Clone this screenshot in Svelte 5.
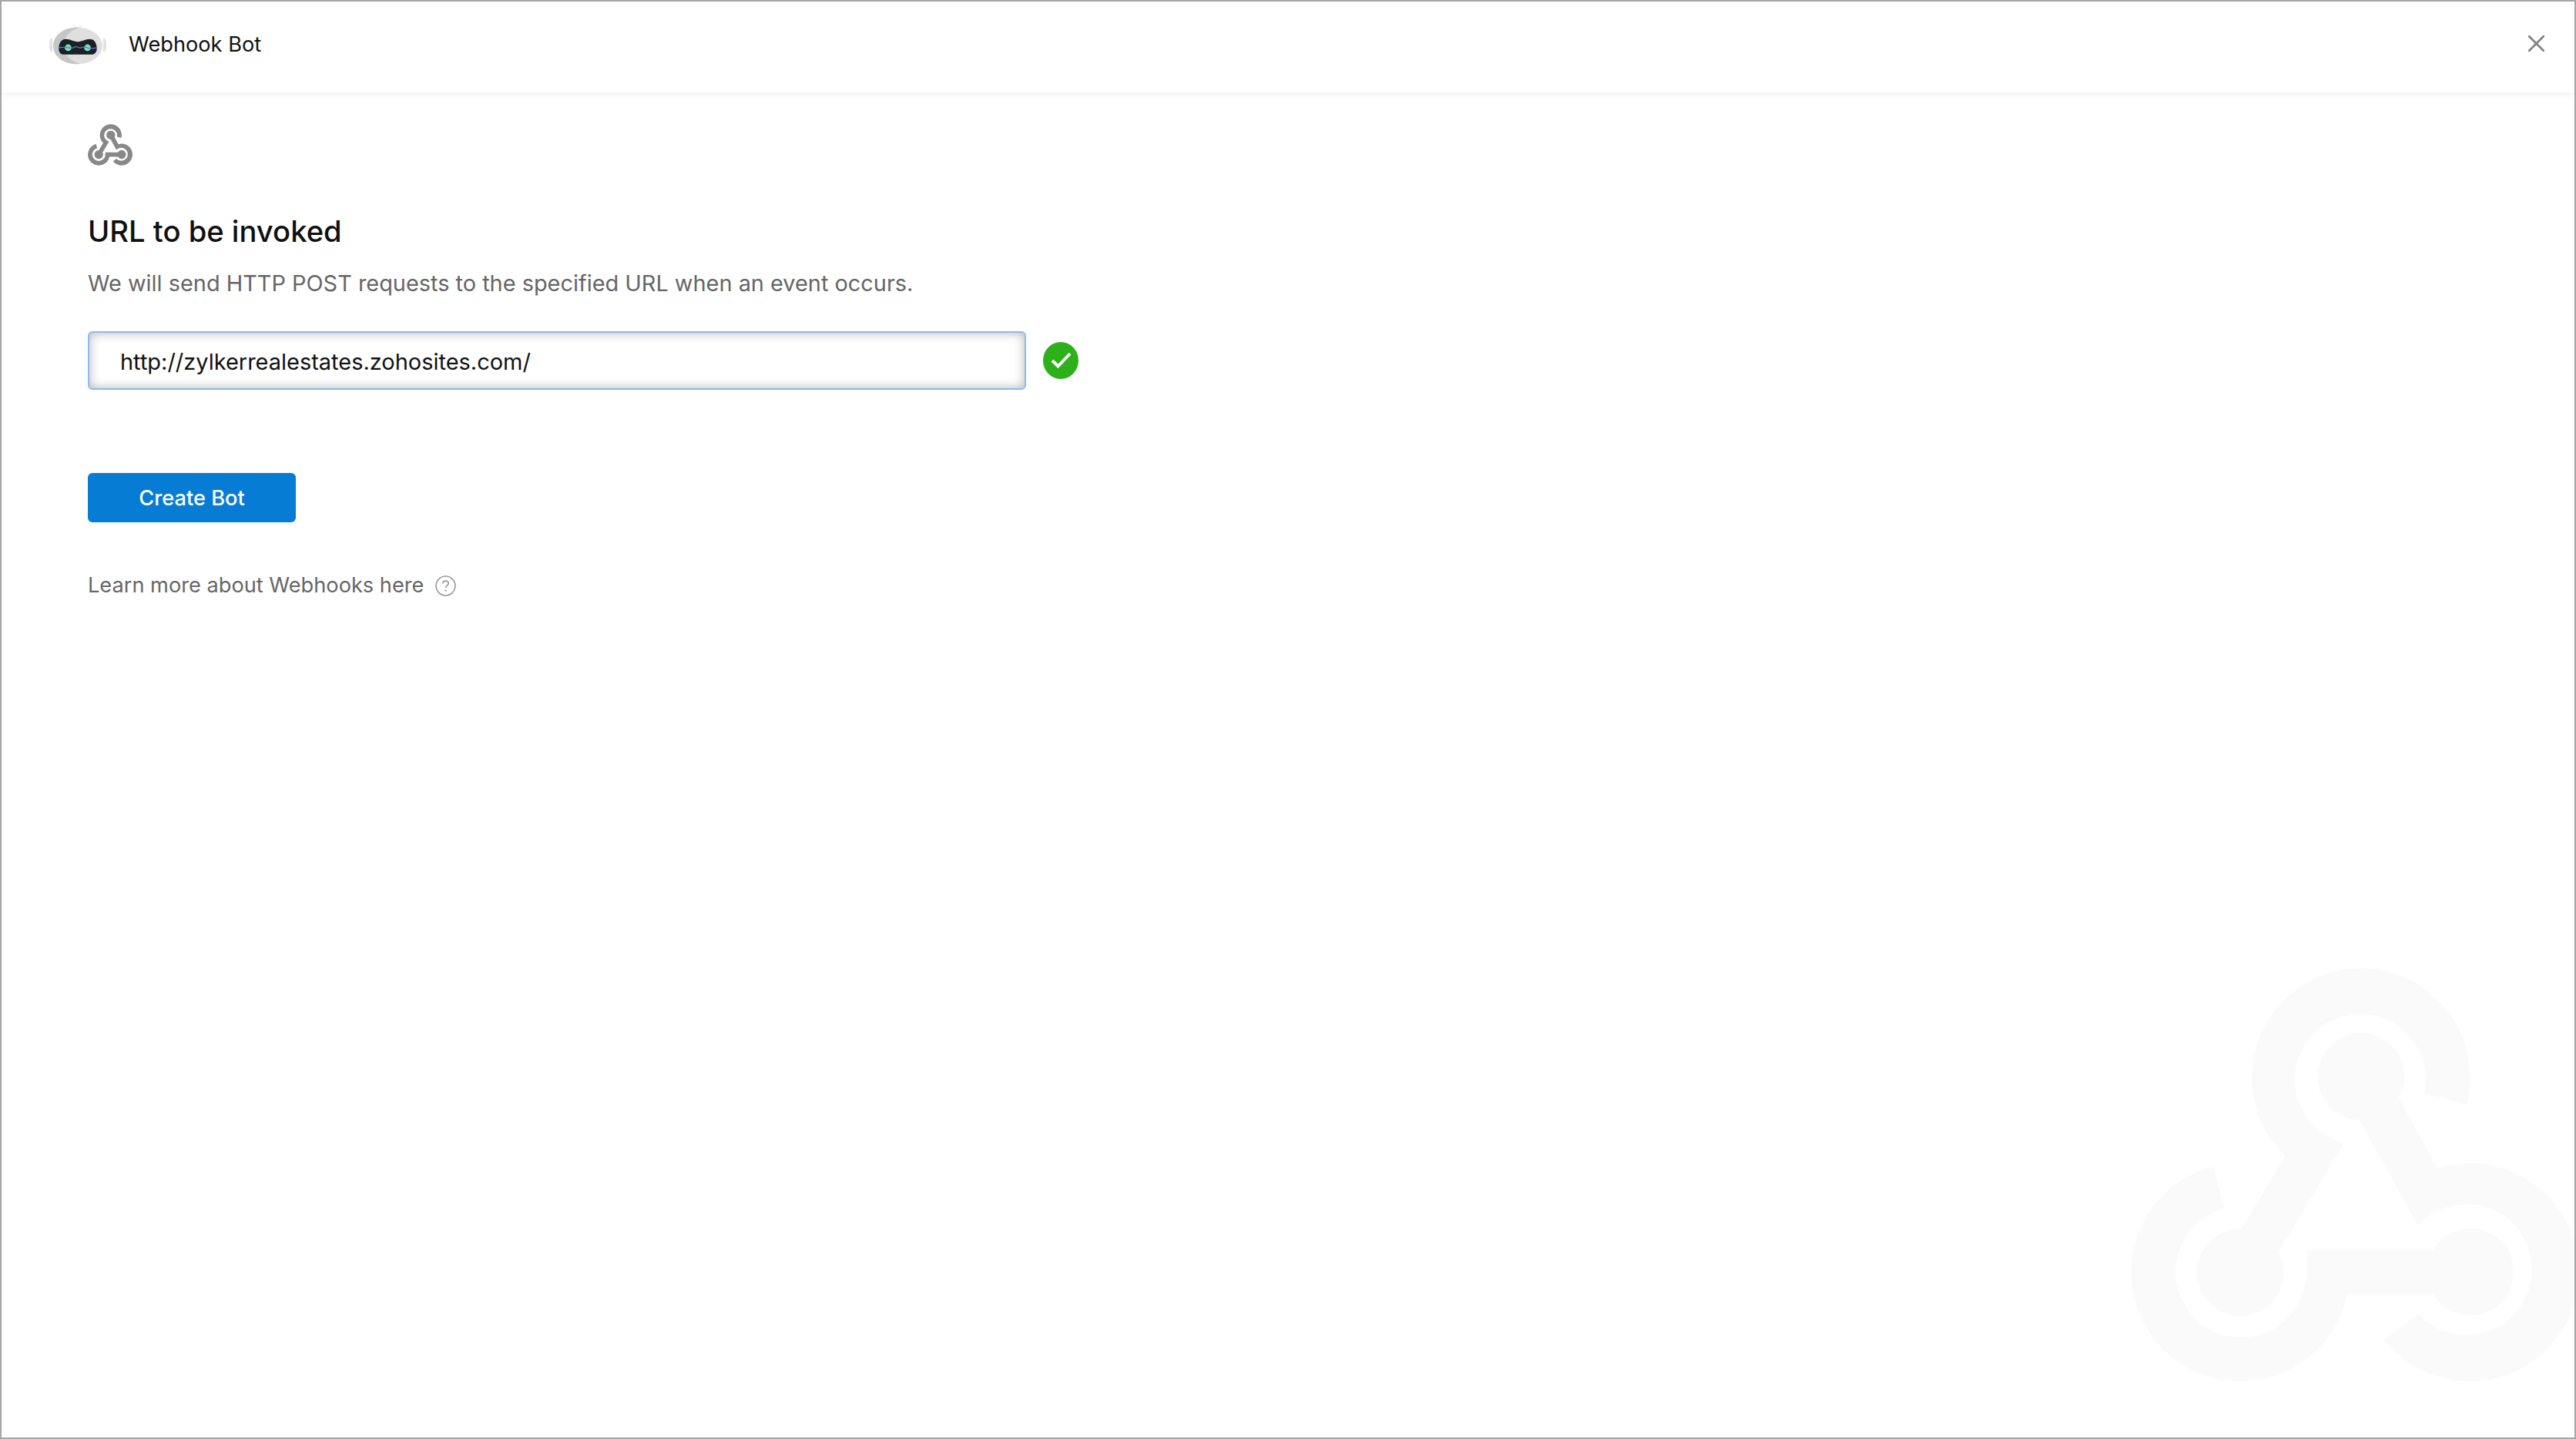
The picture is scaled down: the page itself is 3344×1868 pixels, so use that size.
<script>
  const ring = [
    'M482.3 213.6A141.7 141.7 0 1 0 246.7 281L189.4 375.5A56.5 56.5 0 1 0 238 405L323 263.6A85 85 0 1 1 427 199Z',
    'M343 233.9L419 370.7A85 85 0 1 1 419 485.5L374.9 519.4A141.7 141.7 0 1 0 443.7 296.3L394 205.4A56.5 56.5 0 1 0 343 233.9Z',
    'M153.2 294.2A141.7 141.7 0 1 0 327.1 459.5H437.8A56.5 56.5 0 1 0 437.8 402.9H274.2V432A85 85 0 1 1 167.1 349.2Z'
  ];
</script>

<div class="frame">
  <header class="bar">
    <div class="title">
      <svg class="bot" viewBox="0 0 80 60" aria-hidden="true">
        <path d="M34 1l6 3 6-3-4 5h-4z" fill="#dcdcdc" />
        <path d="M3 19c-2 5-2 12 0 17l3 1V18zM77 19c2 5 2 12 0 17l-3 1V18z" fill="#e2e2e2" />
        <ellipse cx="40" cy="28.5" rx="33" ry="24.5" fill="#dfdfdf" />
        <path d="M38 4C20 4 7 15 7 28.5S20 53 38 53c2 0 4 0 5-0.5C30 49 21 40 21 28 21 17 28 9 41 4.200c-1 0-2-0.200-3-0.200z" fill="#c6c6c6" />
        <path d="M24 19.500c6 0 10 3.500 16 3.500s10-3.500 16-3.500c6 0 9 5 9.500 11 0.500 6-2 9-6 9.500H20.500c-4 0-6.500-3.500-6-9.500 0.500-6 3.500-11 9.500-11z" fill="#1b2026" />
        <circle cx="27" cy="31" r="4.500" fill="#7ddcb9" />
        <circle cx="53" cy="31" r="4.500" fill="#7ddcb9" />
        <path d="M14 31c5-1 9-1 13 0s6 1 9-1 5 2 8 1 5-2 9 0 8 1 13 0" fill="none" stroke="#5b79dd" stroke-width="1.300" />
      </svg>
      <span>Webhook Bot</span>
    </div>
    <svg class="close" viewBox="0 0 21 21" aria-hidden="true">
      <path d="M1 1l19 19M20 1L1 20" stroke="#808080" stroke-width="2.600" stroke-linecap="round" />
    </svg>
  </header>

  <main class="content">
    <svg class="hook" viewBox="46 36 582 538" aria-hidden="true">
      {#each ring as d}<path {d} />{/each}
    </svg>
    <h1>URL to be invoked</h1>
    <p class="lead">We will send HTTP POST requests to the specified URL when an event occurs.</p>
    <div class="field">
      <input type="text" value="http://zylkerrealestates.zohosites.com/" readonly />
      <svg class="ok" viewBox="0 0 46 48" aria-hidden="true">
        <ellipse cx="23" cy="24" rx="23" ry="24" fill="#2db019" />
        <path d="M12 24l7.500 7.500L35 15" fill="none" stroke="#fff" stroke-width="4" />
      </svg>
    </div>
    <button type="button">Create Bot</button>
    <p class="more">
      <span>Learn more about Webhooks here</span>
      <svg class="help" viewBox="0 0 26 26" aria-hidden="true">
        <circle cx="13" cy="13" r="12" fill="none" stroke="#9a9a9a" stroke-width="1.600" />
        <path d="M9.500 10.200c0-2 1.500-3.300 3.600-3.300s3.500 1.200 3.500 3c0 2.800-3.500 2.800-3.500 5.600" fill="none" stroke="#9a9a9a" stroke-width="1.600" />
        <circle cx="13.100" cy="19" r="1.100" fill="#9a9a9a" />
      </svg>
    </p>
  </main>

  <svg class="mark" viewBox="46 36 582 538" aria-hidden="true">
    {#each ring as d}<path {d} />{/each}
  </svg>
</div>

<style>
  :global(body) {
    margin: 0;
    background: #fff;
  }
  .frame {
    position: relative;
    box-sizing: border-box;
    width: 3344px;
    height: 1868px;
    border: 2px solid #a6a6a6;
    overflow: hidden;
    background: #fff;
    font-family: Inter, "Noto Sans", sans-serif;
  }
  .bar {
    display: flex;
    align-items: center;
    justify-content: space-between;
    height: 118px;
    padding: 0 39px 0 60px;
    box-shadow: 0 2px 8px rgba(0, 0, 0, 0.07);
    position: relative;
    z-index: 1;
  }
  .title {
    display: flex;
    align-items: center;
    gap: 27px;
    font-size: 27.2px;
    color: #111;
  }
  .title span {
    position: relative;
    top: -4px;
  }
  .bot {
    width: 78px;
    height: 58px;
  }
  .close {
    width: 21px;
    height: 21px;
    margin-top: -10px;
  }
  .content {
    position: relative;
    z-index: 1;
    padding: 41px 0 0 112px;
  }
  .hook {
    display: block;
    width: 58px;
    height: 54px;
    fill: #888;
  }
  h1 {
    margin: 62px 0 0;
    font-size: 38.2px;
    line-height: 46px;
    font-weight: 500;
    color: #111;
  }
  .lead {
    margin: 25px 0 0;
    font-size: 28.9px;
    line-height: 40px;
    color: #666;
  }
  .field {
    display: flex;
    align-items: center;
    gap: 22px;
    margin-top: 42px;
  }
  input {
    box-sizing: border-box;
    width: 1218px;
    height: 76px;
    padding: 2px 40px 0;
    border: 2px solid #8ab9f5;
    border-radius: 6px;
    box-shadow: inset 0 0 14px rgba(0, 0, 0, 0.3);
    outline: none;
    background: #fff;
    font: 28.96px Inter, "Noto Sans", sans-serif;
    color: #111;
  }
  .ok {
    width: 46px;
    height: 48px;
  }
  button {
    display: block;
    width: 270px;
    height: 64px;
    margin-top: 108px;
    border: 0;
    border-radius: 6px;
    background: #077cd4;
    color: #fff;
    font: 500 27.2px Inter, "Noto Sans", sans-serif;
  }
  .more {
    display: flex;
    align-items: center;
    gap: 15px;
    margin: 62px 0 0;
    font-size: 27.2px;
    line-height: 40px;
    color: #666;
  }
  .help {
    width: 27px;
    height: 27px;
  }
  .mark {
    position: absolute;
    left: 2764px;
    top: 1254px;
    width: 582px;
    height: 538px;
    fill: #fafafa;
  }
</style>
